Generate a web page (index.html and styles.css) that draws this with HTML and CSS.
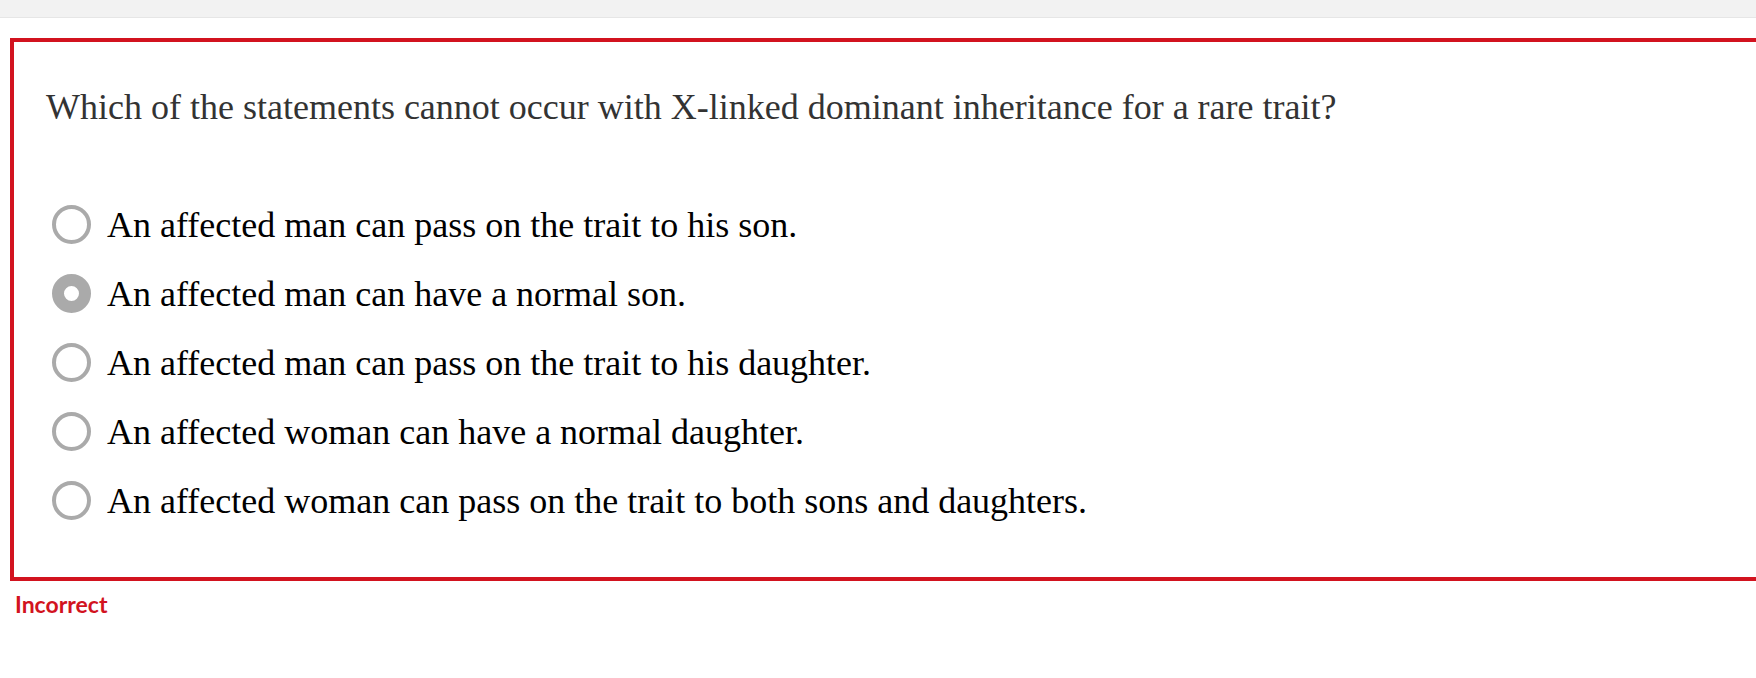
FILE: index.html
```html
<!DOCTYPE html>
<html lang="en">
<head>
<meta charset="utf-8">
<title>Question</title>
<link rel="stylesheet" href="styles.css">
</head>
<body>
<div class="topbar"></div>
<div class="question-box">
  <p class="question">Which of the statements cannot occur with X-linked dominant inheritance for a rare trait?</p>
  <ul class="options">
    <li class="option"><span class="radio"></span><span class="label">An affected man can pass on the trait to his son.</span></li>
    <li class="option"><span class="radio selected"></span><span class="label">An affected man can have a normal son.</span></li>
    <li class="option"><span class="radio"></span><span class="label">An affected man can pass on the trait to his daughter.</span></li>
    <li class="option"><span class="radio"></span><span class="label">An affected woman can have a normal daughter.</span></li>
    <li class="option"><span class="radio"></span><span class="label">An affected woman can pass on the trait to both sons and daughters.</span></li>
  </ul>
</div>
<div class="feedback">Incorrect</div>
</body>
</html>
```

FILE: styles.css
```css
html, body {
  margin: 0;
  padding: 0;
  background: #ffffff;
  overflow: hidden;
}

.topbar {
  height: 17px;
  background: #f2f2f2;
  border-bottom: 1px solid #e6e6e6;
}

.question-box {
  margin: 20px -40px 0 10px;
  border: 4px solid #d2131f;
  padding: 45px 0 42px 32px;
}

.question {
  margin: 0;
  font-family: "Liberation Serif", "Times New Roman", serif;
  font-size: 36px;
  line-height: 40px;
  color: #333333;
}

.options {
  list-style: none;
  margin: 63px 0 0 0;
  padding: 0;
}

.option {
  display: flex;
  align-items: center;
  height: 69px;
  gap: 16px;
  padding-left: 6px;
}

.radio {
  box-sizing: border-box;
  width: 39px;
  height: 39px;
  border-radius: 50%;
  border: 4px solid #aaaaaa;
  background: #ffffff;
  flex: none;
}

.radio.selected {
  border: 12px solid #aaaaaa;
  background: #ffffff;
}

.label {
  font-family: "Liberation Serif", "Times New Roman", serif;
  font-size: 36px;
  line-height: 40px;
  color: #000000;
}

.feedback {
  margin: 8px 0 0 15px;
  font-family: Lato, "Open Sans", sans-serif;
  font-weight: 700;
  font-size: 23px;
  line-height: 30px;
  color: #d2131f;
}
```
